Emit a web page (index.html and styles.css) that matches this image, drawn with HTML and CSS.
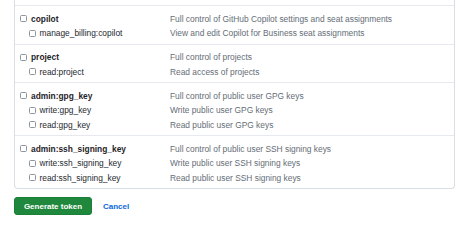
FILE: index.html
```html
<!DOCTYPE html>
<html>
<head>
<meta charset="utf-8">
<link rel="stylesheet" href="styles.css">
</head>
<body>
<div class="page">
  <div class="scopes">
    <div class="group">
      <div class="row"><span class="label main"><span class="cb"></span>copilot</span><span class="desc">Full control of GitHub Copilot settings and seat assignments</span></div>
      <div class="row"><span class="label sub"><span class="cb"></span>manage_billing:copilot</span><span class="desc">View and edit Copilot for Business seat assignments</span></div>
    </div>
    <div class="group">
      <div class="row"><span class="label main"><span class="cb"></span>project</span><span class="desc">Full control of projects</span></div>
      <div class="row"><span class="label sub"><span class="cb"></span>read:project</span><span class="desc">Read access of projects</span></div>
    </div>
    <div class="group">
      <div class="row"><span class="label main"><span class="cb"></span>admin:gpg_key</span><span class="desc">Full control of public user GPG keys</span></div>
      <div class="row"><span class="label sub"><span class="cb"></span>write:gpg_key</span><span class="desc">Write public user GPG keys</span></div>
      <div class="row"><span class="label sub"><span class="cb"></span>read:gpg_key</span><span class="desc">Read public user GPG keys</span></div>
    </div>
    <div class="group">
      <div class="row"><span class="label main"><span class="cb"></span>admin:ssh_signing_key</span><span class="desc">Full control of public user SSH signing keys</span></div>
      <div class="row"><span class="label sub"><span class="cb"></span>write:ssh_signing_key</span><span class="desc">Write public user SSH signing keys</span></div>
      <div class="row"><span class="label sub"><span class="cb"></span>read:ssh_signing_key</span><span class="desc">Read public user SSH signing keys</span></div>
    </div>
  </div>
  <div class="actions">
    <button class="btn-primary">Generate token</button>
    <a class="cancel" href="#">Cancel</a>
  </div>
</div>
</body>
</html>
```
FILE: styles.css
```css
*, *::before, *::after {
  box-sizing: border-box;
}
html, body {
  margin: 0;
  padding: 0;
  background: #ffffff;
}
body {
  font-family: "Liberation Sans", Arial, sans-serif;
  font-size: 8.4px;
  color: #1f2328;
}
.page {
  padding-left: 14px;
  width: 455px;
}
.scopes {
  border: 1px solid #d8dee4;
  border-top: 0;
  border-radius: 0 0 4px 4px;
  padding-top: 5px;
}
.group {
  padding: 5.5px 0 3px;
  border-top: 1px solid #e6eaee;
}
.row {
  display: flex;
  align-items: center;
  height: 14.5px;
}
.label {
  display: flex;
  align-items: center;
  width: 155px;
  flex: none;
}
.label.main {
  font-weight: 700;
  padding-left: 5px;
}
.label.sub {
  padding-left: 14px;
  color: #24292f;
}
.cb {
  width: 7px;
  height: 7px;
  border: 1px solid #8c959f;
  border-radius: 1.5px;
  margin-right: 4px;
  flex: none;
  background: #fff;
}
.label.sub .cb {
  margin-right: 3.5px;
}
.desc {
  color: #656d76;
  white-space: nowrap;
}
.actions {
  display: flex;
  align-items: center;
  margin-top: 8px;
}
.btn-primary {
  width: 78px;
  height: 18px;
  border: 1px solid #1a7f37;
  border-radius: 3px;
  background: #1f883d;
  color: #ffffff;
  font-family: "Liberation Sans", Arial, sans-serif;
  font-size: 8px;
  font-weight: 700;
  padding: 0;
}
.cancel {
  margin-left: 11px;
  color: #0969da;
  font-size: 8px;
  font-weight: 700;
  text-decoration: none;
}
```
